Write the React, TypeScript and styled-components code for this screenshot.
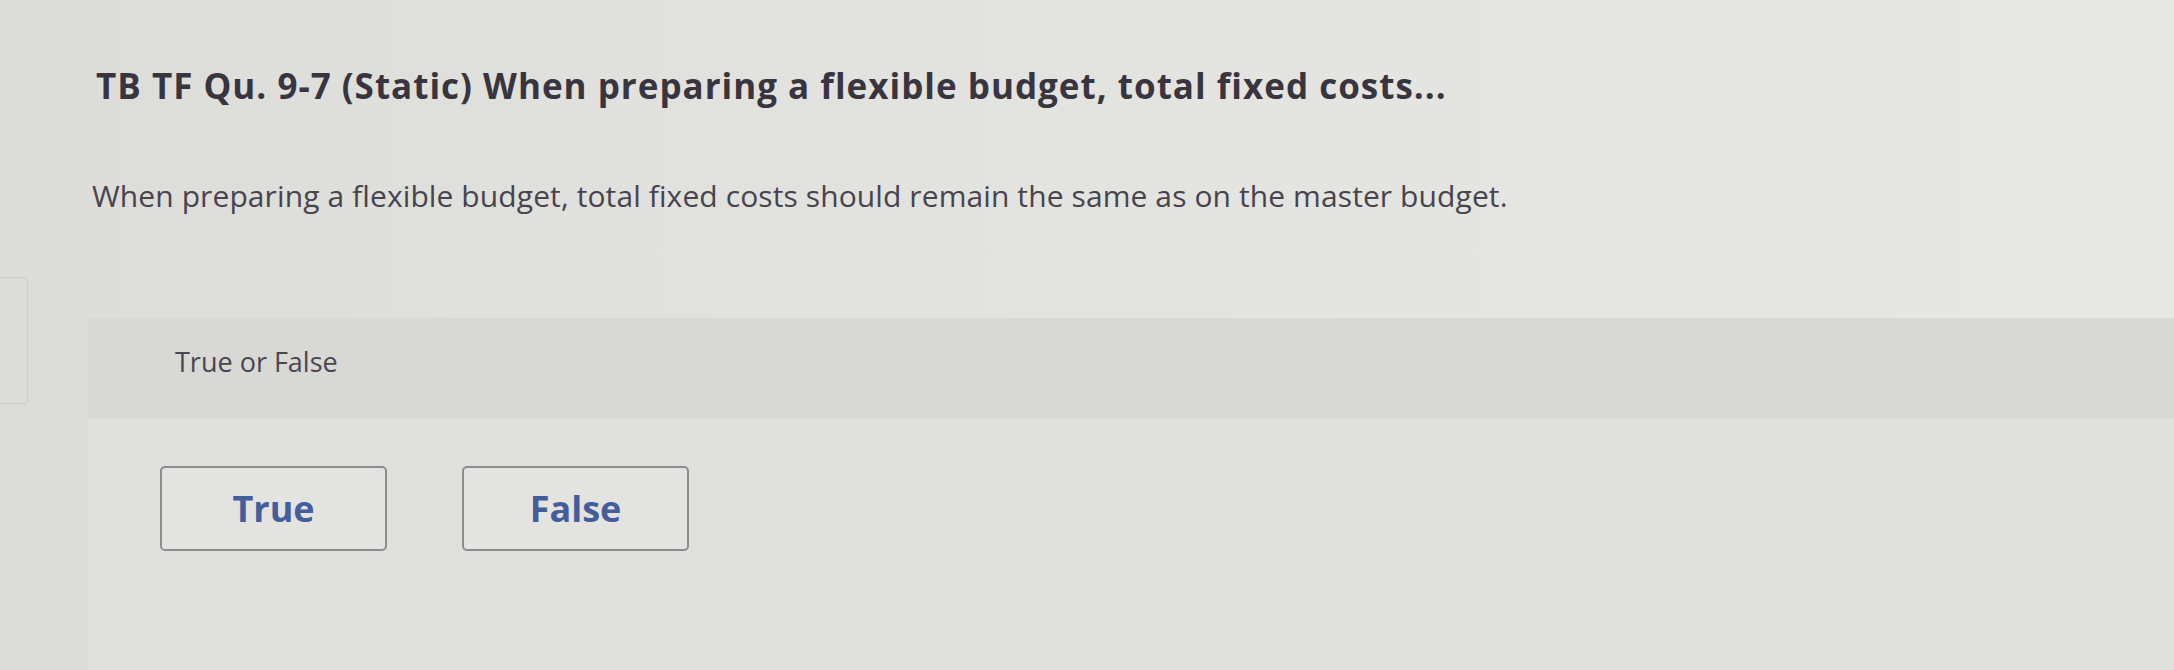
import styled, { createGlobalStyle } from "styled-components";

const GlobalStyle = createGlobalStyle`
    html, body {
        margin: 0;
        padding: 0;
        height: 100%;
        overflow: hidden;
    }
    body {
        background: linear-gradient(90deg, #dcdcd9 0%, #e2e2df 40%, #e7e7e4 100%);
        font-family: "Open Sans", Lato, "Liberation Sans", sans-serif;
        font-variant-ligatures: none;
    }
`;

const Page = styled.div`
    display: flex;
    height: 670px;
    width: 2174px;
`;

const Side = styled.aside`
    width: 28px;
    flex-shrink: 0;
    padding-top: 277px;
`;

const SideCard = styled.div`
    height: 125px;
    border: 1px solid #cdcdca;
    border-left: none;
    border-radius: 0 4px 4px 0;
`;

const Main = styled.main`
    flex: 1;
    display: flex;
    flex-direction: column;
    padding-left: 60px;
`;

const Title = styled.h1`
    margin: 65px 0 0 8px;
    font-size: 35px;
    letter-spacing: 1px;
    line-height: 1.2;
    font-weight: 700;
    color: #39353e;
`;

const Prompt = styled.p`
    margin: 71px 0 0 4px;
    font-size: 30px;
    letter-spacing: 0.1px;
    line-height: 1.2;
    font-weight: 400;
    color: #48444d;
`;

const Panel = styled.section`
    flex: 1;
    margin-top: 104px;
    display: flex;
    flex-direction: column;
    background: #dfdfdc;
`;

const PanelHeader = styled.div`
    height: 100px;
    box-sizing: border-box;
    padding: 28px 0 0 87px;
    background: #d8d8d5;
    font-size: 27px;
    line-height: 1.2;
    color: #4a4650;
`;

const Choices = styled.div`
    display: flex;
    gap: 75px;
    padding: 48px 0 0 72px;
`;

const Choice = styled.button`
    width: 227px;
    height: 85px;
    box-sizing: border-box;
    border: 2px solid #8c8c90;
    border-radius: 5px;
    background: #e3e3e0;
    font-family: "Open Sans", Lato, "Liberation Sans", sans-serif;
    font-size: 36px;
    font-weight: 700;
    color: #465d9c;
    cursor: pointer;
`;

export default function App() {
    return (
        <>
            <GlobalStyle />
            <Page>
                <Side>
                    <SideCard />
                </Side>
                <Main>
                    <Title>TB TF Qu. 9-7 (Static) When preparing a flexible budget, total fixed costs...</Title>
                    <Prompt>
                        When preparing a flexible budget, total fixed costs should remain the same as on the master
                        budget.
                    </Prompt>
                    <Panel>
                        <PanelHeader>True or False</PanelHeader>
                        <Choices>
                            <Choice>True</Choice>
                            <Choice>False</Choice>
                        </Choices>
                    </Panel>
                </Main>
            </Page>
        </>
    );
}
